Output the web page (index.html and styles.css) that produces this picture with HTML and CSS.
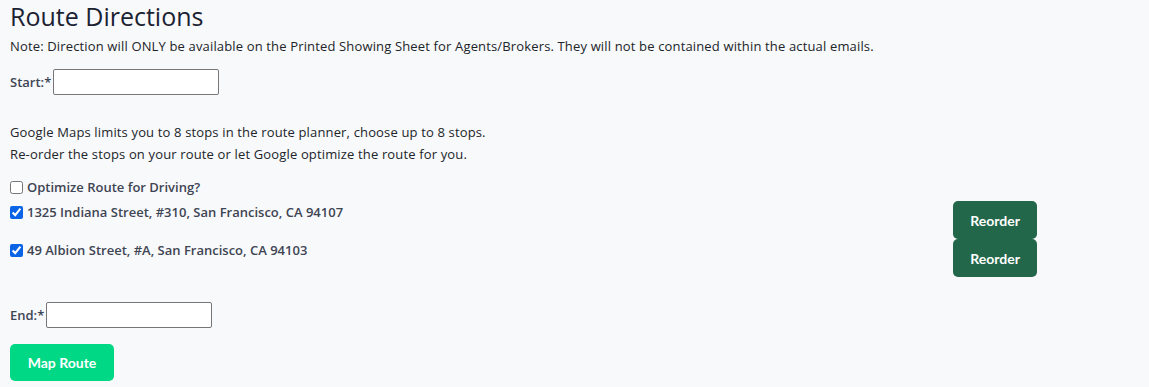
FILE: index.html
```html
<!DOCTYPE html>
<html>
<head>
<meta charset="utf-8">
<link rel="stylesheet" href="styles.css">
</head>
<body>
<div class="page">
  <h2 class="title">Route Directions</h2>
  <p class="note">Note: Direction will ONLY be available on the Printed Showing Sheet for Agents/Brokers. They will not be contained within the actual emails.</p>
  <div class="field field-start">
    <label class="field-label">Start:*</label>
    <input class="text-input" type="text">
  </div>
  <p class="info">Google Maps limits you to 8 stops in the route planner, choose up to 8 stops.<br>Re-order the stops on your route or let Google optimize the route for you.</p>
  <label class="check optimize"><input type="checkbox"> Optimize Route for Driving?</label>
  <div class="stops">
    <div class="stop">
      <label class="check stop-label"><input type="checkbox" checked> 1325 Indiana Street, #310, San Francisco, CA 94107</label>
      <button class="btn btn-reorder">Reorder</button>
    </div>
    <div class="stop">
      <label class="check stop-label"><input type="checkbox" checked> 49 Albion Street, #A, San Francisco, CA 94103</label>
      <button class="btn btn-reorder">Reorder</button>
    </div>
  </div>
  <div class="field field-end">
    <label class="field-label">End:*</label>
    <input class="text-input" type="text">
  </div>
  <button class="btn btn-map">Map Route</button>
</div>
</body>
</html>
```
FILE: styles.css
```css
html, body {
  margin: 0;
  padding: 0;
  background: #f8f9fb;
}
.page {
  padding: 0 10px;
  font-family: "Open Sans", "Noto Sans", sans-serif;
  font-size: 13px;
  color: #212529;
}
.title {
  margin: 0;
  padding-top: 1px;
  font-size: 25px;
  font-weight: 400;
  line-height: 30px;
  color: #1b2232;
}
.note {
  margin: 6px 0 0;
  line-height: 18px;
  letter-spacing: 0.15px;
}
.field {
  display: flex;
  align-items: center;
  gap: 2px;
}
.field-start {
  margin-top: 14px;
}
.field-label {
  font-weight: 600;
  color: #3e4553;
}
.text-input {
  width: 166px;
  height: 26px;
  box-sizing: border-box;
  border: 1px solid #767676;
  border-radius: 2px;
  background: #fff;
  margin: 0;
  padding: 0 4px;
}
.info {
  margin: 26px 0 0;
  line-height: 22px;
  letter-spacing: 0.15px;
}
.check {
  display: flex;
  align-items: center;
  gap: 4px;
  font-weight: 600;
  color: #3e4553;
  line-height: 22px;
}
.check input {
  margin: 0;
  width: 13px;
  height: 13px;
  accent-color: #0b63e6;
}
.optimize {
  margin-top: 11px;
}
.stops {
  margin-top: 3px;
}
.stop {
  display: flex;
  align-items: flex-start;
  height: 38px;
}
.stop-label {
  flex: 0 0 943px;
}
.btn {
  font-family: "Lato", sans-serif;
  font-weight: 700;
  font-size: 14px;
  color: #fff;
  border: none;
  border-radius: 5px;
  cursor: pointer;
  padding: 0;
}
.btn-reorder {
  width: 84px;
  height: 38px;
  background: #22674a;
}
.field-end {
  margin-top: 25px;
}
.btn-map {
  margin-top: 16px;
  width: 104px;
  height: 37px;
  background: #00d886;
}
```
